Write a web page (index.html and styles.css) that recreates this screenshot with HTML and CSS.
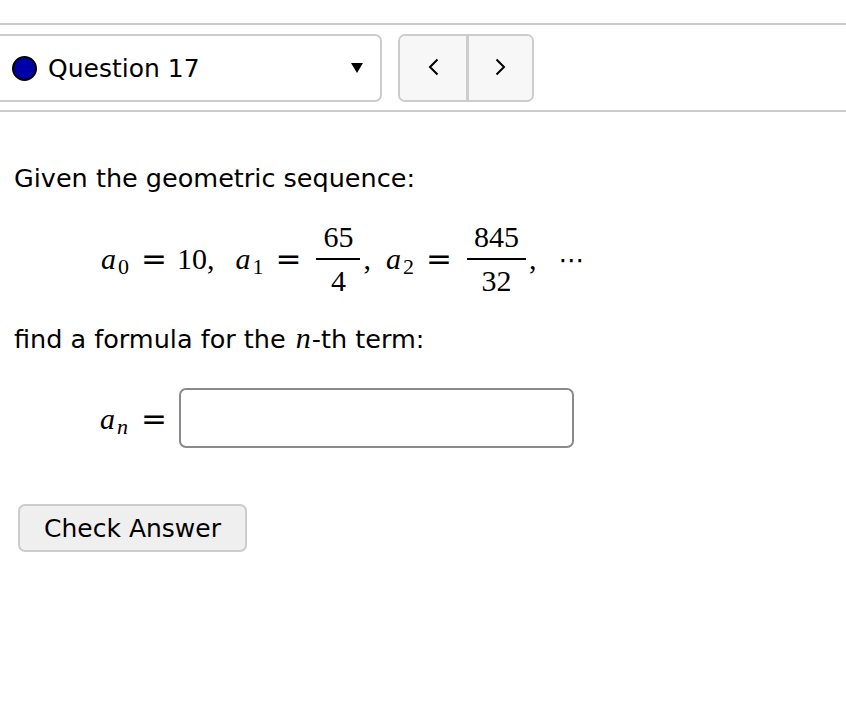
FILE: index.html
```html
<!DOCTYPE html>
<html lang="en">

<head>
  <meta charset="UTF-8">
  <meta name="viewport" content="width=device-width, initial-scale=1.0">
  <title>Question 17</title>
  <link rel="stylesheet" href="styles.css">
</head>

<body>
  <!--문제 선택 바-->
  <div class="qbar">
    <div class="qselect">
      <span class="dot"></span>
      <span class="qname">Question 17</span>
      <span class="caret"></span>
    </div>
    <div class="qnav">
      <button class="navbtn" aria-label="previous">
        <svg width="11" height="18" viewBox="0 0 11 18"><path d="M9.5 1.5 L2 9 L9.5 16.5" fill="none" stroke="#000" stroke-width="2"/></svg>
      </button>
      <button class="navbtn" aria-label="next">
        <svg width="11" height="18" viewBox="0 0 11 18"><path d="M1.5 1.5 L9 9 L1.5 16.5" fill="none" stroke="#000" stroke-width="2"/></svg>
      </button>
    </div>
  </div>

  <!--문제 본문-->
  <div class="question">
    <p class="prompt first">Given the geometric sequence:</p>

    <div class="display"><span class="mi">a</span><sub>0</sub><span class="mo">=</span>10,<span class="mi sp">a</span><sub>1</sub><span class="mo">=</span><span class="frac"><span class="num">65</span><span class="den">4</span></span><span class="comma">,</span><span class="mi sp2">a</span><sub>2</sub><span class="mo">=</span><span class="frac"><span class="num">845</span><span class="den">32</span></span><span class="comma">,</span><span class="dots">⋯</span></div>

    <p class="prompt">find a formula for the <span class="mi">n</span>-th term:</p>

    <div class="answer">
      <span class="math"><span class="mi">a</span><sub class="mi">n</sub><span class="mo">=</span></span>
      <input type="text" class="ans">
    </div>

    <button class="check">Check Answer</button>
  </div>
</body>

</html>
```

FILE: styles.css
```css
body {
  margin: 0;
  font-family: "DejaVu Sans", sans-serif;
  color: #000;
  overflow: hidden;
}

/*문제 선택 바*/
.qbar {
  display: flex;
  align-items: center;
  margin-top: 23px;
  padding: 9px 0 8px;
  border-top: 2px solid #ccc;
  border-bottom: 2px solid #ccc;
}

.qselect {
  display: flex;
  align-items: center;
  width: 392px;
  height: 68px;
  margin-left: -10px;
  padding-left: 20px;
  border: 2px solid #ccc;
  border-radius: 7px;
  box-sizing: border-box;
}

.dot {
  width: 21px;
  height: 21px;
  border: 2px solid #000;
  border-radius: 50%;
  background: #0000a8;
}

.qname {
  margin-left: 11px;
  font-size: 25px;
}

.caret {
  margin-left: auto;
  margin-right: 17px;
  border-left: 6.5px solid transparent;
  border-right: 6.5px solid transparent;
  border-top: 10px solid #000;
}

.qnav {
  display: flex;
  margin-left: 16px;
  height: 68px;
  border: 2px solid #ccc;
  border-radius: 7px;
  box-sizing: border-box;
  overflow: hidden;
}

.navbtn {
  width: 66px;
  border: 0;
  background: #f7f7f7;
  padding: 0;
}

.navbtn+.navbtn {
  border-left: 3px solid #ccc;
}

/*문제 본문*/
.question {
  padding-left: 14px;
}

.prompt {
  margin: 15px 0 0;
  font-size: 25.5px;
  line-height: 29px;
}

.prompt.first {
  margin-top: 52px;
}

.prompt .mi {
  margin: 0 1px 0 2px;
  font-size: 30px;
}

.display {
  margin: 15px 0 0 87px;
  height: 100px;
  line-height: 100px;
  white-space: nowrap;
  font-family: "Liberation Serif", serif;
  font-size: 30px;
}

.mi {
  font-family: "Liberation Serif", serif;
  font-style: italic;
}

.sp {
  margin-left: 21px;
}

.sp2 {
  margin-left: 15px;
}

sub {
  font-size: 22px;
  line-height: 0;
  vertical-align: -5px;
  margin-left: 2px;
}

.mo {
  display: inline-block;
  margin: 0 10px 0 12px;
  font-family: "DejaVu Sans", sans-serif;
  font-size: 31px;
}

.frac {
  display: inline-flex;
  flex-direction: column;
  align-items: center;
  vertical-align: 22px;
  line-height: 30px;
  margin: 0 2px 0 5px;
}

.num {
  padding: 0 7px 6px;
  border-bottom: 2px solid #000;
}

.den {
  padding-top: 6px;
}

.comma {
  margin-left: 1px;
}

.dots {
  margin-left: 22px;
  font-family: "DejaVu Sans", sans-serif;
  font-size: 26px;
}

.answer {
  display: flex;
  align-items: center;
  margin: 34px 0 0 86px;
}

.math {
  font-family: "Liberation Serif", serif;
  font-size: 30px;
}

.math .mo {
  margin: 0 12px 0 13px;
}

.ans {
  width: 395px;
  height: 60px;
  border: 2px solid #8a8a8a;
  border-radius: 7px;
  box-sizing: border-box;
}

.check {
  display: block;
  margin: 56px 0 0 4px;
  width: 229px;
  height: 48px;
  font-family: inherit;
  font-size: 25px;
  background: #efefef;
  border: 2px solid #ccc;
  border-radius: 7px;
}
```
